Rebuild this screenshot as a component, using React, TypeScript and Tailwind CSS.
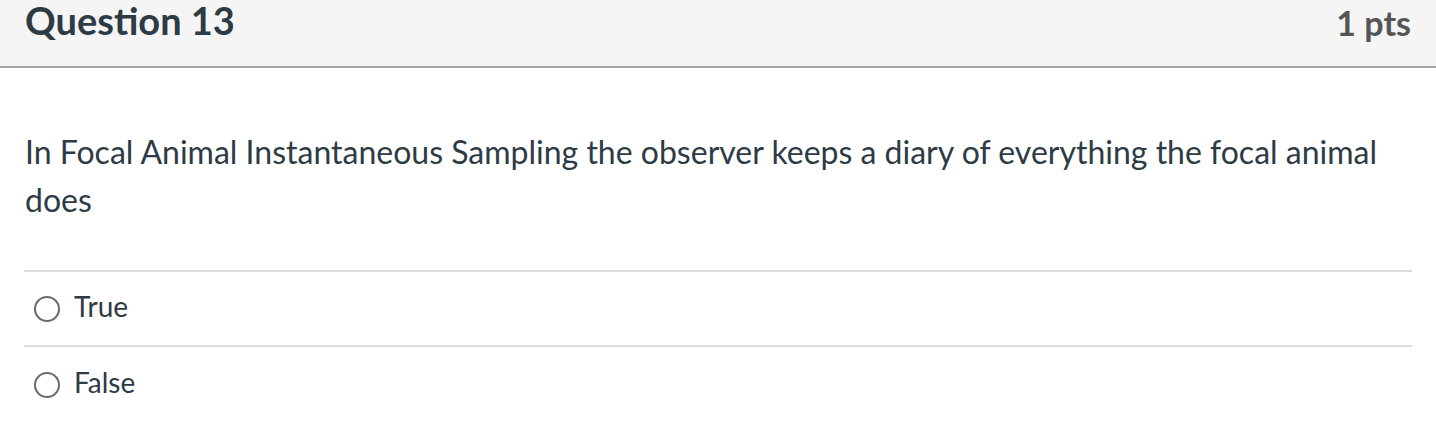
import React from 'react';

const answers = ['True', 'False'];

export default function App() {
  return (
    <div className="w-[1436px] h-[434px] bg-white text-[#2d3b45] font-['Lato','Liberation_Sans',sans-serif]">
      <div className="h-[68px] bg-[#f5f5f5] border-b-2 border-[#a5a5a5] flex items-start justify-between pl-[25px] pr-[25px] pt-[2px]">
        <h2 className="text-[38px] font-bold leading-[36px]">Question 13</h2>
        <div className="text-[34px] font-bold text-[#555555] leading-[36px] pt-[3px]">1 pts</div>
      </div>
      <div className="px-[24px]">
        <p className="pt-[60px] text-[32px] leading-[48px] pl-px">
          In Focal Animal Instantaneous Sampling the observer keeps a diary of everything the focal animal does
        </p>
        <div className="mt-[46px] border-t-2 border-[#dddddd]">
          {answers.map((a, i) => (
            <label
              key={a}
              className={`flex items-center gap-[14px] h-[75px] ${i === 0 ? 'border-b-2 border-[#dddddd]' : ''}`}
            >
              <span className="ml-[10px] w-[26px] h-[26px] rounded-full border-2 border-[#6b6b6b] bg-white" />
              <span className="text-[28px] mb-[5px]">{a}</span>
            </label>
          ))}
        </div>
      </div>
    </div>
  );
}
